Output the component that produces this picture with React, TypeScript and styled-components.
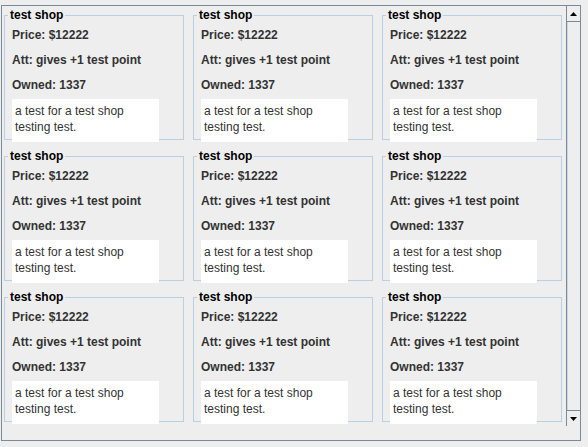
import styled, { createGlobalStyle } from "styled-components";

const GlobalStyle = createGlobalStyle`
  html, body {
    margin: 0;
    padding: 0;
    background: #eeeeee;
  }
  body {
    width: 588px;
    height: 447px;
    overflow: hidden;
    font-family: "Liberation Sans", Arial, sans-serif;
  }
`

const ScrollPane = styled.div`
  margin: 5px 0 0 1px;
  width: 580px;
  height: 436px;
  box-sizing: border-box;
  border: 1px solid #7a8a99;
  display: flex;
  background: #eeeeee;
`

const Viewport = styled.div`
  flex: 1;
  display: grid;
  grid-template-columns: repeat(3, 180px);
  grid-auto-rows: 131px;
  column-gap: 9px;
  row-gap: 10px;
  padding: 3px 0 0 2px;
  align-content: start;
`

const ShopPanel = styled.fieldset`
  margin: 0;
  min-width: 0;
  box-sizing: border-box;
  height: 131px;
  border: 1px solid #b8cfe5;
  padding: 6px 0 0 3px;
`

const Title = styled.legend`
  padding: 0 2px;
  font-size: 12px;
  font-weight: bold;
  line-height: 13px;
  color: #000000;
`

const Body = styled.div`
  padding-left: 4px;
  display: flex;
  flex-direction: column;
  align-items: flex-start;
`

const Label = styled.div`
  font-size: 12px;
  font-weight: bold;
  line-height: 15px;
  color: #333333;
  margin-bottom: 10px;
  white-space: nowrap;
`

const Description = styled.div`
  margin-top: -4px;
  width: 147px;
  height: 43px;
  box-sizing: border-box;
  padding: 4px 3px 0 3px;
  background: #ffffff;
  font-size: 12px;
  line-height: 16px;
  color: #333333;
`

const ScrollBar = styled.div`
  width: 14px;
  height: 420px;
  box-sizing: border-box;
  border-left: 1px solid #7a8a99;
  display: flex;
  flex-direction: column;
`

const ArrowButton = styled.div<{ $down?: boolean }>`
  height: 16px;
  box-sizing: border-box;
  display: flex;
  align-items: center;
  justify-content: center;
  background: #eeeeee;
  ${(p) => (p.$down ? "border-top: 1px solid #7a8a99;" : "border-bottom: 1px solid #7a8a99;")}
`

const Track = styled.div`
  flex: 1;
  display: flex;
`

const Thumb = styled.div`
  flex: 1;
  border-left: 1px solid #c8d7e6;
  background: #eeeeee;
`

function Arrow({ down }: { down?: boolean }) {
  return (
    <svg width="7" height="4" viewBox="0 0 7 4">
      {down ? <polygon points="0,0 7,0 3.5,4" fill="#000" /> : <polygon points="3.5,0 7,4 0,4" fill="#000" />}
    </svg>
  )
}

function ShopItem() {
  return (
    <ShopPanel>
      <Title>test shop</Title>
      <Body>
        <Label>Price: $12222</Label>
        <Label>Att: gives +1 test point</Label>
        <Label>Owned: 1337</Label>
        <Description>a test for a test shop testing test.</Description>
      </Body>
    </ShopPanel>
  )
}

export default function App() {
  const items = Array.from({ length: 9 }, (_, i) => i)
  return (
    <>
      <GlobalStyle />
      <ScrollPane>
        <Viewport>
          {items.map((i) => (
            <ShopItem key={i} />
          ))}
        </Viewport>
        <ScrollBar>
          <ArrowButton>
            <Arrow />
          </ArrowButton>
          <Track>
            <Thumb />
          </Track>
          <ArrowButton $down>
            <Arrow down />
          </ArrowButton>
        </ScrollBar>
      </ScrollPane>
    </>
  )
}
